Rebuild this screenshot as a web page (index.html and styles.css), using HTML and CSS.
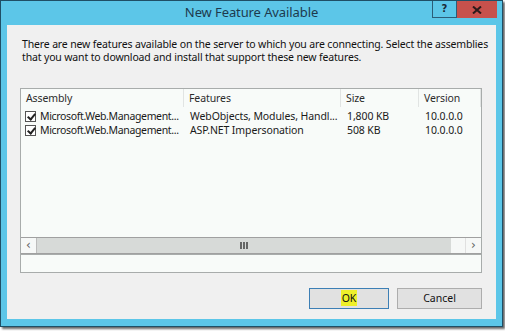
FILE: index.html
```html
<!DOCTYPE html>
<html>
<head>
<meta charset="utf-8">
<link rel="stylesheet" href="styles.css">
</head>
<body>
<div class="window">
  <div class="titlebar">
    <div></div>
    <div class="title">New Feature Available</div>
    <div class="controls">
      <div class="btn-help">?</div>
      <div class="btn-close">
        <svg width="10" height="8" viewBox="0 0 10 8"><path d="M1 0.5 L9 7.5 M9 0.5 L1 7.5" stroke="#2b1a1a" stroke-width="2"/></svg>
      </div>
    </div>
  </div>
  <div class="content">
    <p class="intro">There are new features available on the server to which you are connecting. Select the assemblies<br>that you want to download and install that support these new features.</p>
    <div class="listbox">
      <div class="list">
        <div class="row header">
          <div class="c c1">Assembly</div>
          <div class="c c2">Features</div>
          <div class="c c3">Size</div>
          <div class="c c4">Version</div>
        </div>
        <div class="row">
          <div class="c c1"><span class="cb"></span><span class="asm">Microsoft.Web.Management...</span></div>
          <div class="c c2">WebObjects, Modules, Handl...</div>
          <div class="c c3">1,800 KB</div>
          <div class="c c4">10.0.0.0</div>
        </div>
        <div class="row">
          <div class="c c1"><span class="cb"></span><span class="asm">Microsoft.Web.Management...</span></div>
          <div class="c c2">ASP.NET Impersonation</div>
          <div class="c c3">508 KB</div>
          <div class="c c4">10.0.0.0</div>
        </div>
      </div>
      <div class="hscroll">
        <div class="arrow">&#8249;</div>
        <div class="thumb">
          <svg width="8" height="7" viewBox="0 0 8 7"><path d="M1 0 V7 M4 0 V7 M7 0 V7" stroke="#4a4a4a" stroke-width="1.6"/></svg>
        </div>
        <div class="track"></div>
        <div class="arrow">&#8250;</div>
      </div>
    </div>
    <div class="statusbox"></div>
    <div class="buttons">
      <div class="button ok"><span class="hl">OK</span></div>
      <div class="button cancel">Cancel</div>
    </div>
  </div>
</div>
</body>
</html>
```
FILE: styles.css
```css
html, body {
  margin: 0;
  padding: 0;
  background: #ffffff;
}
body {
  width: 505px;
  height: 331px;
  overflow: hidden;
  font-family: "Noto Sans", "Open Sans", sans-serif;
  font-size: 10.5px;
  color: #1a1a1a;
}
.window {
  box-sizing: border-box;
  width: 503px;
  height: 327px;
  border: 1px solid #1f4f66;
  background: #5cc6e8;
  box-shadow: 2px 2px 2px rgba(40, 40, 40, 0.7);
  display: flex;
  flex-direction: column;
}
.titlebar {
  height: 24px;
  display: grid;
  grid-template-columns: 1fr auto 1fr;
  align-items: start;
}
.title {
  font-size: 13px;
  color: #1d3a4e;
  line-height: 23px;
  letter-spacing: -0.1px;
}
.controls {
  justify-self: end;
  display: flex;
  margin-right: 5px;
}
.btn-help {
  box-sizing: border-box;
  width: 25px;
  height: 17px;
  border: 1px solid #2c5d78;
  border-top: none;
  background: #5cc6e8;
  font-family: "DejaVu Sans", sans-serif;
  font-weight: bold;
  font-size: 10px;
  color: #1b2a36;
  text-align: center;
  line-height: 15px;
}
.btn-close {
  width: 40px;
  height: 17px;
  background: #c7514c;
  display: flex;
  align-items: center;
  justify-content: center;
}
.content {
  flex: 1;
  margin: 0 6px 7px 6px;
  background: #f0f0f0;
  padding: 13px 14px 0 13px;
  display: flex;
  flex-direction: column;
}
.intro {
  margin: 0 0 0 2px;
  line-height: 12.5px;
  white-space: nowrap;
  letter-spacing: -0.15px;
  color: #111;
}
.listbox {
  margin-top: 25px;
  box-sizing: border-box;
  height: 167px;
  border: 1px solid #a8acab;
  background: #f8fbf9;
  display: flex;
  flex-direction: column;
}
.list {
  flex: 1;
}
.row {
  display: grid;
  grid-template-columns: 163px 157px 78px 1fr;
  height: 14px;
  line-height: 14px;
  white-space: nowrap;
}
.row.header {
  height: 18px;
  line-height: 18px;
  margin-bottom: 2px;
  color: #2c2c2c;
}
.row.header .c {
  border-right: 1px solid #e1e4e3;
  padding-left: 5px;
}
.c {
  overflow: hidden;
  padding-left: 6px;
  letter-spacing: -0.1px;
}
.row .c1 {
  padding-left: 4px;
  display: flex;
  align-items: center;
}
.row.header .c1 {
  padding-left: 5px;
}
.asm {
  letter-spacing: -0.35px;
}
.cb {
  box-sizing: border-box;
  width: 11px;
  height: 11px;
  border: 1px solid #555;
  background: #fff;
  margin-right: 4px;
  position: relative;
  flex: none;
}
.cb::after {
  content: "";
  position: absolute;
  left: 3px;
  top: 0px;
  width: 3px;
  height: 6px;
  border-right: 2px solid #222;
  border-bottom: 2px solid #222;
  transform: rotate(40deg);
}
.hscroll {
  height: 15px;
  display: flex;
  border-top: 1px solid #a0a0a0;
  border-bottom: 1px solid #a0a0a0;
  background: #f6f8f7;
}
.arrow {
  width: 15px;
  text-align: center;
  line-height: 14px;
  font-size: 12px;
  color: #606060;
  font-family: "DejaVu Sans", sans-serif;
}
.thumb {
  width: 414px;
  background: #d7dad8;
  border-left: 1px solid #bcbcbc;
  display: flex;
  align-items: center;
  justify-content: center;
}
.track {
  flex: 1;
  border-right: 1px solid #e0e0e0;
}
.statusbox {
  box-sizing: border-box;
  height: 18px;
  border: 1px solid #a8acab;
  border-top: none;
  background: #f8fbf9;
}
.buttons {
  display: flex;
  justify-content: flex-end;
  gap: 8px;
  margin-top: 15px;
}
.button {
  box-sizing: border-box;
  height: 21px;
  border: 1px solid #adadad;
  background: #e1e1e1;
  text-align: center;
  line-height: 19px;
  color: #111;
}
.button.ok {
  width: 80px;
  border-color: #3d7fb5;
}
.button.cancel {
  width: 85px;
}
.hl {
  background: #eef02a;
  padding: 1px 1px;
}
```
